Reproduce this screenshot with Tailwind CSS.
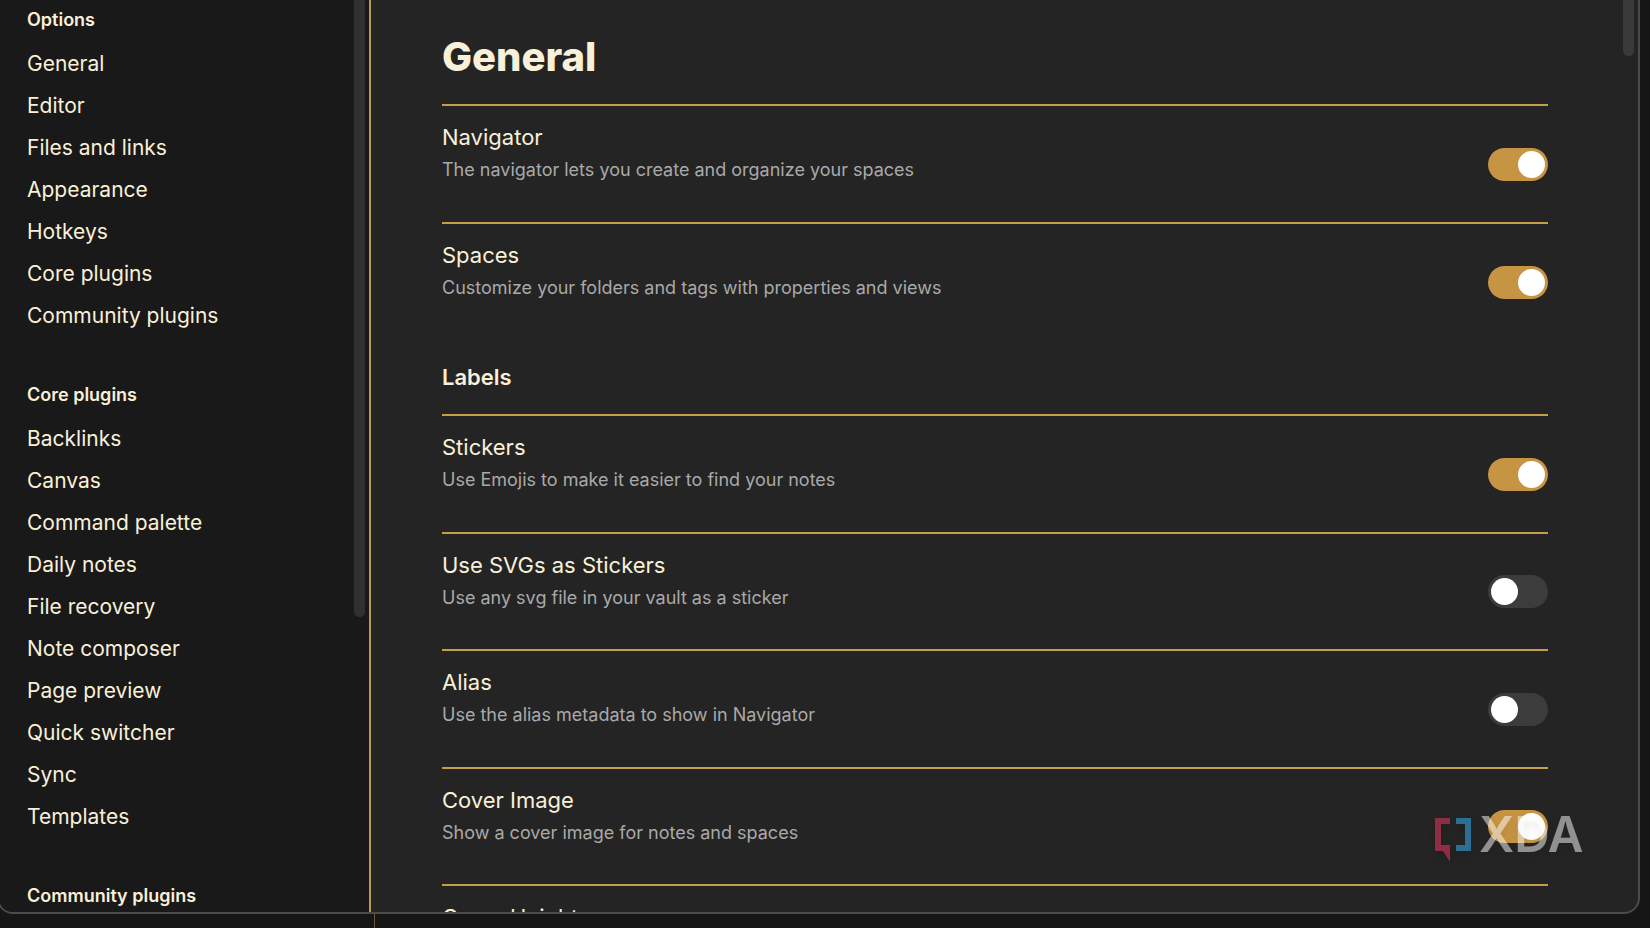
<!DOCTYPE html>
<html lang="en">

<head>
  <meta charset="UTF-8">
  <meta name="viewport" content="width=device-width, initial-scale=1.0">
  <title>Settings</title>
  <script src="https://cdn.jsdelivr.net/npm/@tailwindcss/browser@4"></script>
</head>

<body class="relative h-screen overflow-hidden flex flex-col bg-[#161616] font-['Inter',sans-serif] text-[#f9f0d9]">

  <!-- settings window -->
  <div class="relative flex flex-1 min-h-0 -ml-[3px] mr-[10px] rounded-b-2xl border-2 border-t-0 border-[#4b4b4b] bg-[#242424] overflow-hidden">

    <nav class="relative w-[372px] shrink-0 overflow-hidden border-r-2 border-[#b99a50] bg-[#191919] pl-7">
      <section>
        <h2 class="h-10 mb-[3px] flex items-center text-lg font-semibold">Options</h2>
        <ul class="text-[21px] leading-[42px]">
          <li><a href="#general" class="block">General</a></li>
          <li><a href="#editor" class="block">Editor</a></li>
          <li><a href="#files" class="block">Files and links</a></li>
          <li><a href="#appearance" class="block">Appearance</a></li>
          <li><a href="#hotkeys" class="block">Hotkeys</a></li>
          <li><a href="#core" class="block">Core plugins</a></li>
          <li><a href="#community" class="block">Community plugins</a></li>
        </ul>
      </section>

      <section class="mt-[38px]">
        <h2 class="h-10 mb-[3px] flex items-center text-lg font-semibold">Core plugins</h2>
        <ul class="text-[21px] leading-[42px]">
          <li><a href="#backlinks" class="block">Backlinks</a></li>
          <li><a href="#canvas" class="block">Canvas</a></li>
          <li><a href="#palette" class="block">Command palette</a></li>
          <li><a href="#daily" class="block">Daily notes</a></li>
          <li><a href="#recovery" class="block">File recovery</a></li>
          <li><a href="#composer" class="block">Note composer</a></li>
          <li><a href="#preview" class="block">Page preview</a></li>
          <li><a href="#switcher" class="block">Quick switcher</a></li>
          <li><a href="#sync" class="block">Sync</a></li>
          <li><a href="#templates" class="block">Templates</a></li>
        </ul>
      </section>

      <section class="mt-[38px]">
        <h2 class="h-10 mb-[3px] flex items-center text-lg font-semibold">Community plugins</h2>
      </section>

      <!-- scrollbar thumb -->
      <div class="absolute top-0 right-1 w-[11px] h-[617px] rounded-b-full bg-[#303030]"></div>
    </nav>

    <main id="general" class="relative flex-1 min-w-0 overflow-hidden pl-[71px] pr-[90px]">
      <h1 class="h-[104px] pt-8 text-[40px] leading-[50px] font-extrabold">General</h1>

      <div class="h-[118px] flex items-center border-t-2 border-[#c2a049]">
        <label for="navigator" class="flex-1 self-start pt-[15px]">
          <span class="block text-[22px] leading-8">Navigator</span>
          <span class="block mt-px text-[18px] leading-8 text-[#a9a9a9]">The navigator lets you create and organize your spaces</span>
        </label>
        <input type="checkbox" role="switch" id="navigator" checked class="appearance-none w-[60px] h-[33px] p-[3px] rounded-full bg-[#3c3c3c] checked:bg-[#c79443] before:block before:size-[27px] before:rounded-full before:bg-white checked:before:ml-[27px]">
      </div>

      <div class="h-[118px] flex items-center border-t-2 border-[#c2a049]">
        <label for="spaces" class="flex-1 self-start pt-[15px]">
          <span class="block text-[22px] leading-8">Spaces</span>
          <span class="block mt-px text-[18px] leading-8 text-[#a9a9a9]">Customize your folders and tags with properties and views</span>
        </label>
        <input type="checkbox" role="switch" id="spaces" checked class="appearance-none w-[60px] h-[33px] p-[3px] rounded-full bg-[#3c3c3c] checked:bg-[#c79443] before:block before:size-[27px] before:rounded-full before:bg-white checked:before:ml-[27px]">
      </div>

      <h2 class="h-[74px] pt-[21px] text-[22px] leading-8 font-semibold">Labels</h2>

      <div class="h-[118px] flex items-center border-t-2 border-[#c2a049]">
        <label for="stickers" class="flex-1 self-start pt-[15px]">
          <span class="block text-[22px] leading-8">Stickers</span>
          <span class="block mt-px text-[18px] leading-8 text-[#a9a9a9]">Use Emojis to make it easier to find your notes</span>
        </label>
        <input type="checkbox" role="switch" id="stickers" checked class="appearance-none w-[60px] h-[33px] p-[3px] rounded-full bg-[#3c3c3c] checked:bg-[#c79443] before:block before:size-[27px] before:rounded-full before:bg-white checked:before:ml-[27px]">
      </div>

      <div class="h-[117px] flex items-center border-t-2 border-[#c2a049]">
        <label for="svgs" class="flex-1 self-start pt-[15px]">
          <span class="block text-[22px] leading-8">Use SVGs as Stickers</span>
          <span class="block mt-px text-[18px] leading-8 text-[#a9a9a9]">Use any svg file in your vault as a sticker</span>
        </label>
        <input type="checkbox" role="switch" id="svgs" class="appearance-none w-[60px] h-[33px] p-[3px] rounded-full bg-[#3c3c3c] checked:bg-[#c79443] before:block before:size-[27px] before:rounded-full before:bg-white checked:before:ml-[27px]">
      </div>

      <div class="h-[118px] flex items-center border-t-2 border-[#c2a049]">
        <label for="alias" class="flex-1 self-start pt-[15px]">
          <span class="block text-[22px] leading-8">Alias</span>
          <span class="block mt-px text-[18px] leading-8 text-[#a9a9a9]">Use the alias metadata to show in Navigator</span>
        </label>
        <input type="checkbox" role="switch" id="alias" class="appearance-none w-[60px] h-[33px] p-[3px] rounded-full bg-[#3c3c3c] checked:bg-[#c79443] before:block before:size-[27px] before:rounded-full before:bg-white checked:before:ml-[27px]">
      </div>

      <div class="h-[117px] flex items-center border-t-2 border-[#c2a049]">
        <label for="cover" class="flex-1 self-start pt-[15px]">
          <span class="block text-[22px] leading-8">Cover Image</span>
          <span class="block mt-px text-[18px] leading-8 text-[#a9a9a9]">Show a cover image for notes and spaces</span>
        </label>
        <input type="checkbox" role="switch" id="cover" checked class="appearance-none w-[60px] h-[33px] p-[3px] rounded-full bg-[#3c3c3c] checked:bg-[#c79443] before:block before:size-[27px] before:rounded-full before:bg-white checked:before:ml-[27px]">
      </div>

      <div class="border-t-2 border-[#c2a049] pt-[15px]">
        <span class="block text-[22px] leading-8">Cover Height</span>
      </div>

      <!-- scrollbar thumb -->
      <div class="absolute top-0 right-1 w-[11px] h-14 rounded-b-full bg-[#3a3a3a]"></div>
    </main>
  </div>

  <!-- strip of the app behind the window -->
  <div class="h-[14px] shrink-0 pl-[374px]">
    <div class="h-full w-px bg-[#6b5c36]"></div>
  </div>

  <!-- watermark -->
  <svg class="absolute right-[56px] bottom-16 drop-shadow-lg" width="160" height="50" viewBox="0 0 160 50">
    <path d="M1 4h15v6H7v21h9v17L9 37H1z" fill="#8f2d47"/>
    <path d="M22 4h15v33H22v-6h9V10h-9z" fill="#2b6f94"/>
    <text x="45" y="38" fill="#fff" fill-opacity=".5" font-size="49" font-weight="600" font-family="Inter, sans-serif">XDA</text>
  </svg>

</body>

</html>
